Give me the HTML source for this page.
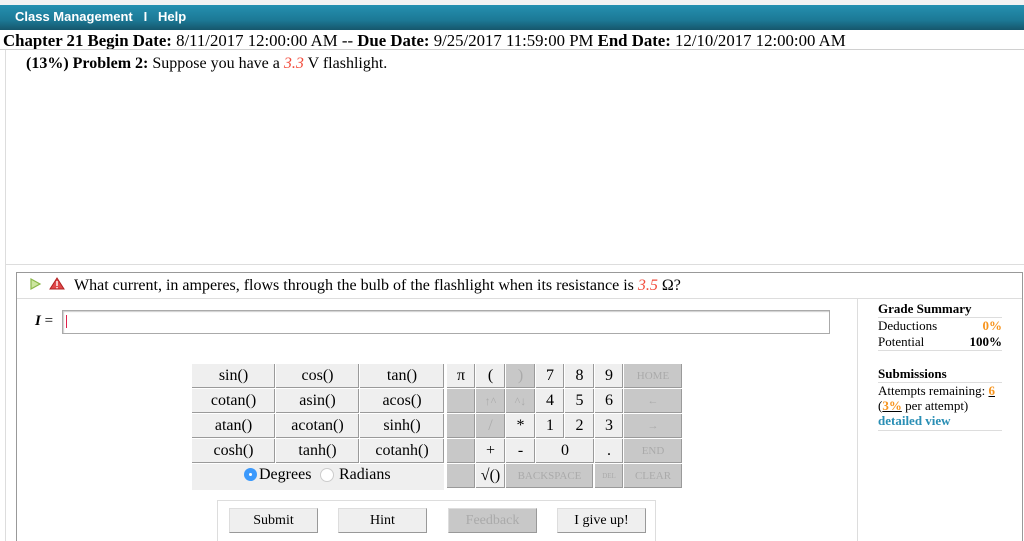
<!DOCTYPE html>
<html><head><style>
html,body{margin:0;width:1024px;height:541px;overflow:hidden}
body{background:#fff;font-family:"Liberation Serif",serif;position:relative;color:#000}
.a{position:absolute}
.k{position:absolute;height:24px;background:#efefef;border-right:1px solid #fff;border-bottom:1px solid #fff;box-shadow:inset -1px -1px 0 #9a9a9a;text-align:center;font-size:16px;line-height:24px}
.g{background:#c8c8c8;color:#aaa}
.b{position:absolute;top:508px;width:87px;height:23px;background:#efefef;border:1px solid #999;border-top-color:#ddd;border-left-color:#ddd;text-align:center;font-size:14px;line-height:23px}
</style></head><body>
<div class="a" style="left:0;top:0;width:1024px;height:5px;background:#f2f2f2"></div>
<div class="a" style="left:0;top:5px;width:1024px;height:25px;background:linear-gradient(#2590b0,#1c7996 60%,#16566c)"></div>
<div class="a" style="left:15px;top:9px;font:bold 13px 'Liberation Sans',sans-serif;color:#fff;white-space:nowrap">Class Management &nbsp;&nbsp;I&nbsp;&nbsp; Help</div>
<div class="a" style="left:3px;top:31px;font-size:16.8px;white-space:nowrap"><b>Chapter 21 Begin Date:</b> 8/11/2017 12:00:00 AM -- <b>Due Date:</b> 9/25/2017 11:59:00 PM <b>End Date:</b> 12/10/2017 12:00:00 AM</div>
<div class="a" style="left:0;top:49px;width:1024px;height:1px;background:#d0d0d0"></div>
<div class="a" style="left:5px;top:50px;width:1px;height:491px;background:#ddd"></div>
<div class="a" style="left:5px;top:264px;width:1019px;height:1px;background:#ddd"></div>
<div class="a" style="left:26px;top:55px;font-size:16px;white-space:nowrap"><b>(13%) Problem 2:</b> Suppose you have a <i style="color:#f24a3a">3.3</i> V flashlight.</div>
<div class="a" style="left:16px;top:272px;width:1005px;height:275px;border:1px solid #999;border-bottom:none"></div>
<div class="a" style="left:17px;top:298px;width:1005px;height:1px;background:#ddd"></div>
<div class="a" style="left:857px;top:299px;width:1px;height:242px;background:#ddd"></div>
<svg class="a" style="left:29px;top:277px" width="42" height="14"><path d="M2 2 L11 7 L2 12 Z" fill="#cde6a0" stroke="#8bb84a" stroke-width="1.2"/><path d="M28 1 L35 12 L21 12 Z" fill="#e0484a" stroke="#b02020"/><rect x="27.3" y="4" width="1.4" height="5" fill="#fff"/><rect x="27.3" y="10" width="1.4" height="1.3" fill="#fff"/></svg>
<div class="a" style="left:74px;top:277px;font-size:16px;white-space:nowrap">What current, in amperes, flows through the bulb of the flashlight when its resistance is <i style="color:#f24a3a">3.5</i> Ω?</div>
<div class="a" style="left:35px;top:313px;font-size:15px"><i><b>I</b></i> =</div>
<div class="a" style="left:62px;top:310px;width:766px;height:22px;border:1px solid #aaa;box-shadow:inset 1px 1px 1px #ccc"></div>
<div class="a" style="left:66px;top:315px;width:1px;height:13px;background:#e0204a"></div>
<div class="a" style="left:878px;top:301px;font-size:13px;font-weight:bold">Grade Summary</div>
<div class="a" style="left:878px;top:317px;width:124px;height:1px;background:#ddd"></div>
<div class="a" style="left:878px;top:318px;width:124px;font-size:13px;line-height:16px">Deductions<span style="float:right;color:#f7941d;font-weight:bold">0%</span><br>Potential<span style="float:right;font-weight:bold">100%</span></div>
<div class="a" style="left:878px;top:350px;width:124px;height:1px;background:#ddd"></div>
<div class="a" style="left:878px;top:366px;font-size:13px;font-weight:bold">Submissions</div>
<div class="a" style="left:878px;top:382px;width:124px;height:1px;background:#ddd"></div>
<div class="a" style="left:878px;top:383px;font-size:13px;line-height:15px;white-space:nowrap">Attempts remaining: <b style="color:#f7941d;text-decoration:underline;text-decoration-color:#000">6</b><br>(<b style="color:#f7941d;text-decoration:underline;text-decoration-color:#000">3%</b> per attempt)<br><b style="color:#2a8fb5">detailed view</b></div>
<div class="a" style="left:878px;top:430px;width:124px;height:1px;background:#ddd"></div>

<div class="a" style="left:192px;top:364px;width:252px;height:126px;background:#efefef"></div>
<div class="k" style="left:192px;top:364px;width:83px">sin()</div><div class="k" style="left:276px;top:364px;width:83px">cos()</div><div class="k" style="left:360px;top:364px;width:84px">tan()</div>
<div class="k" style="left:192px;top:389px;width:83px">cotan()</div><div class="k" style="left:276px;top:389px;width:83px">asin()</div><div class="k" style="left:360px;top:389px;width:84px">acos()</div>
<div class="k" style="left:192px;top:414px;width:83px">atan()</div><div class="k" style="left:276px;top:414px;width:83px">acotan()</div><div class="k" style="left:360px;top:414px;width:84px">sinh()</div>
<div class="k" style="left:192px;top:439px;width:83px">cosh()</div><div class="k" style="left:276px;top:439px;width:83px">tanh()</div><div class="k" style="left:360px;top:439px;width:84px">cotanh()</div>
<div class="a" style="left:244px;top:468px;width:13px;height:13px;border-radius:50%;background:#3b99fc"><div style="margin:5px;width:3px;height:3px;border-radius:50%;background:#fff"></div></div>
<div class="a" style="left:259px;top:466px;font-size:16px">Degrees</div>
<div class="a" style="left:320px;top:468px;width:12px;height:12px;border-radius:50%;border:1px solid #ccc;background:#fff"></div>
<div class="a" style="left:339px;top:466px;font-size:16px">Radians</div>

<div class="k" style="left:447px;top:364px;width:28px">π</div><div class="k" style="left:476px;top:364px;width:29px">(</div><div class="k g" style="left:506px;top:364px;width:29px">)</div>
<div class="k" style="left:536px;top:364px;width:28px">7</div><div class="k" style="left:565px;top:364px;width:29px">8</div><div class="k" style="left:595px;top:364px;width:28px">9</div><div class="k g" style="left:624px;top:364px;width:58px;font-size:11px">HOME</div>
<div class="k g" style="left:447px;top:389px;width:28px"></div><div class="k g" style="left:476px;top:389px;width:29px;font-size:12px">↑^</div><div class="k g" style="left:506px;top:389px;width:29px;font-size:12px">^↓</div>
<div class="k" style="left:536px;top:389px;width:28px">4</div><div class="k" style="left:565px;top:389px;width:29px">5</div><div class="k" style="left:595px;top:389px;width:28px">6</div><div class="k g" style="left:624px;top:389px;width:58px;font-size:11px">←</div>
<div class="k g" style="left:447px;top:414px;width:28px"></div><div class="k g" style="left:476px;top:414px;width:29px">/</div><div class="k" style="left:506px;top:414px;width:29px">*</div>
<div class="k" style="left:536px;top:414px;width:28px">1</div><div class="k" style="left:565px;top:414px;width:29px">2</div><div class="k" style="left:595px;top:414px;width:28px">3</div><div class="k g" style="left:624px;top:414px;width:58px;font-size:11px">→</div>
<div class="k g" style="left:447px;top:439px;width:28px"></div><div class="k" style="left:476px;top:439px;width:29px">+</div><div class="k" style="left:506px;top:439px;width:29px">-</div>
<div class="k" style="left:536px;top:439px;width:58px">0</div><div class="k" style="left:595px;top:439px;width:28px">.</div><div class="k g" style="left:624px;top:439px;width:58px;font-size:11px">END</div>
<div class="k g" style="left:447px;top:464px;width:28px"></div><div class="k" style="left:476px;top:464px;width:29px">√()</div><div class="k g" style="left:506px;top:464px;width:87px;font-size:11px">BACKSPACE</div>
<div class="k g" style="left:595px;top:464px;width:28px;font-size:7px">DEL</div><div class="k g" style="left:624px;top:464px;width:58px;font-size:11px">CLEAR</div>

<div class="a" style="left:217px;top:500px;width:437px;height:41px;border:1px solid #ddd;border-bottom:none"></div>
<div class="b" style="left:229px">Submit</div>
<div class="b" style="left:338px">Hint</div>
<div class="b" style="left:448px;background:#c8c8c8;color:#aaa">Feedback</div>
<div class="b" style="left:557px">I give up!</div>
</body></html>
